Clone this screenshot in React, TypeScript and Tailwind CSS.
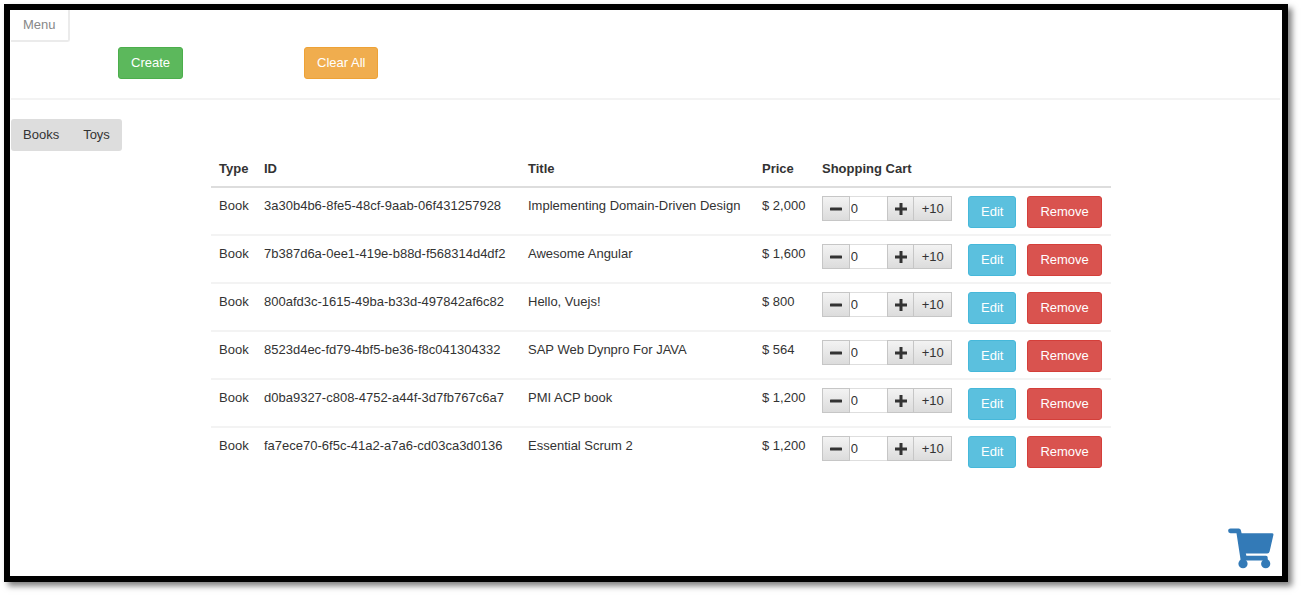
import React, { useState } from 'react';

interface Product {
    id: string;
    type: string;
    title: string;
    price: number;
}

const initialBooks: Product[] = [
    { id: '3a30b4b6-8fe5-48cf-9aab-06f431257928', type: 'Book', title: 'Implementing Domain-Driven Design', price: 2000 },
    { id: '7b387d6a-0ee1-419e-b88d-f568314d4df2', type: 'Book', title: 'Awesome Angular', price: 1600 },
    { id: '800afd3c-1615-49ba-b33d-497842af6c82', type: 'Book', title: 'Hello, Vuejs!', price: 800 },
    { id: '8523d4ec-fd79-4bf5-be36-f8c041304332', type: 'Book', title: 'SAP Web Dynpro For JAVA', price: 564 },
    { id: 'd0ba9327-c808-4752-a44f-3d7fb767c6a7', type: 'Book', title: 'PMI ACP book', price: 1200 },
    { id: 'fa7ece70-6f5c-41a2-a7a6-cd03ca3d0136', type: 'Book', title: 'Essential Scrum 2', price: 1200 },
];

const btnClasses = "h-8 shrink-0 rounded-[3px] border px-3 text-center text-white whitespace-nowrap";
const stepClasses = "flex h-full items-center justify-center border border-[#c6c6c6] bg-linear-to-b from-[#f3f3f3] to-[#dcdcdc]";

interface QuantityProps {
    label: string;
    value: number;
    onChange: (value: number) => void;
}

const Quantity: React.FC<QuantityProps> = ({ label, value, onChange }) => (
    <div className="flex h-[25px]">
        <button type="button" aria-label="Decrease" onClick={() => onChange(Math.max(0, value - 1))} className={`${stepClasses} w-7`}>
            <svg viewBox="0 0 12 12" className="h-3 w-3" fill="#333"><rect y="4.5" width="12" height="3" rx="0.6" /></svg>
        </button>
        <input
            type="text"
            aria-label={`Quantity of ${label}`}
            value={value}
            onChange={e => onChange(Number(e.target.value) || 0)}
            className="h-full w-[37px] border-y border-[#dedede] bg-white px-px focus:outline-none"
        />
        <button type="button" aria-label="Increase" onClick={() => onChange(value + 1)} className={`${stepClasses} w-7`}>
            <svg viewBox="0 0 12 12" className="h-3 w-3" fill="#333"><path d="M4.5 0h3v4.5H12v3H7.5V12h-3V7.5H0v-3h4.5z" /></svg>
        </button>
        <button type="button" onClick={() => onChange(value + 10)} className={`${stepClasses} w-[38px] border-l-0`}>+10</button>
    </div>
);

const CartIcon: React.FC = () => (
    <svg viewBox="0 0 46 41" className="h-[41px] w-[46px]" fill="#337ab7">
        <path d="M2.5.4h8.3q1.6 0 2 1.7l.8 3.2H44q1.8 0 1.4 1.8L41.6 23.500q-.4 1.900-2.400 1.900H17.800l.6 2.300H38q1.700 0 1.700 1.700V35h-4.200v-2.600H17V36h-4.300v-3.500L8.500 5.200h-6a2.400 2.400 0 0 1 0-4.800z" />
        <circle cx="15" cy="35.7" r="4.600" />
        <circle cx="37.700" cy="35.700" r="4.600" />
    </svg>
);

export default function App() {
    const [books, setBooks] = useState(initialBooks);
    const [cart, setCart] = useState<Record<string, number>>({});

    return (
        <div className="flex min-h-screen bg-white pt-1 pr-[13px] pb-[14px] pl-1 font-['Liberation_Sans',Arial,sans-serif] text-[13px] leading-5 text-[#333]">
            <div className="flex grow flex-col border-[6px] border-black bg-white px-px shadow-[4px_4px_6px_rgba(0,0,0,0.5)]">
                <header>
                    <button type="button" className="block h-8 rounded-br-[3px] border-r-2 border-b-2 border-[#ebebeb] px-3 text-[#888]">Menu</button>
                    <div className="mt-[5px] flex pl-[107px]">
                        <div className="w-[186px]">
                            <button type="button" className={`${btnClasses} border-[#4cae4c] bg-[#5cb85c]`}>Create</button>
                        </div>
                        <button type="button" onClick={() => setCart({})} className={`${btnClasses} border-[#eea236] bg-[#f0ad4e]`}>Clear All</button>
                    </div>
                </header>
                <hr className="mr-px mt-[19px] border-t-2 border-[#f3f3f3]" />

                <nav className="mt-[19px] flex h-8 w-fit items-center rounded-[3px] bg-[#ddd]">
                    <a href="#books" className="px-3">Books</a>
                    <a href="#toys" className="px-3">Toys</a>
                </nav>

                <main className="pl-[200px]">
                    <table className="w-[900px] table-fixed text-left">
                        <colgroup>
                            <col className="w-[45px]" />
                            <col className="w-[264px]" />
                            <col className="w-[234px]" />
                            <col className="w-[60px]" />
                            <col className="w-[146px]" />
                            <col />
                        </colgroup>
                        <thead>
                            <tr className="h-9 border-b-2 border-[#ddd]">
                                <th className="px-2">Type</th>
                                <th className="px-2">ID</th>
                                <th className="px-2">Title</th>
                                <th className="px-2">Price</th>
                                <th className="px-2">Shopping Cart</th>
                                <th></th>
                            </tr>
                        </thead>
                        <tbody>
                            {books.map(book => (
                                <tr key={book.id} className="h-12 border-b-2 border-[#f3f3f3] align-top last:border-b-0">
                                    <td className="px-2 pt-2">{book.type}</td>
                                    <td className="px-2 pt-2 whitespace-nowrap">{book.id}</td>
                                    <td className="px-2 pt-2 whitespace-nowrap">{book.title}</td>
                                    <td className="px-2 pt-2 whitespace-nowrap">$ {book.price.toLocaleString('en-US')}</td>
                                    <td className="px-2 pt-2">
                                        <Quantity
                                            label={book.title}
                                            value={cart[book.id] ?? 0}
                                            onChange={value => setCart({ ...cart, [book.id]: value })}
                                        />
                                    </td>
                                    <td className="px-2 pt-2">
                                        <div className="flex gap-[11px]">
                                            <button type="button" className={`${btnClasses} border-[#46b8da] bg-[#5bc0de]`}>Edit</button>
                                            <button
                                                type="button"
                                                onClick={() => setBooks(books.filter(b => b.id !== book.id))}
                                                className={`${btnClasses} border-[#d43f3a] bg-[#d9534f]`}
                                            >
                                                Remove
                                            </button>
                                        </div>
                                    </td>
                                </tr>
                            ))}
                        </tbody>
                    </table>
                </main>

                <button type="button" aria-label="Open cart" className="mt-auto mr-[7px] mb-[7px] self-end">
                    <CartIcon />
                </button>
            </div>
        </div>
    );
}
